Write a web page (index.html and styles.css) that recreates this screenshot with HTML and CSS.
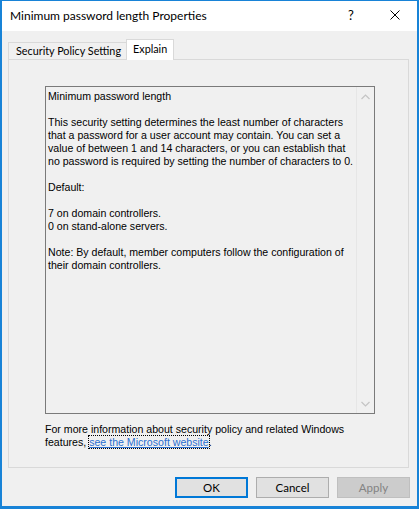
FILE: index.html
```html
<!DOCTYPE html>
<html>
<head>
<meta charset="utf-8">
<link rel="stylesheet" href="styles.css">
</head>
<body>
<div class="window">
  <div class="titlebar">
    <span class="title">Minimum password length Properties</span>
    <span class="help">?</span>
    <span class="close"><svg width="10" height="10" viewBox="0 0 10 10"><path d="M0.5 0.5 L9.5 9.5 M9.5 0.5 L0.5 9.5" stroke="#000" stroke-width="1" fill="none"/></svg></span>
  </div>
  <div class="client">
    <div class="tabs">
      <div class="tab">Security Policy Setting</div>
      <div class="tab active">Explain</div>
    </div>
    <div class="panel">
      <div class="textbox">
        <div class="text">
          <div class="para">Minimum password length</div>
          <div class="para">This security setting determines the least number of characters<br>that a password for a user account may contain. You can set a<br>value of between 1 and 14 characters, or you can establish that<br>no password is required by setting the number of characters to 0.</div>
          <div class="para">Default:</div>
          <div class="para">7 on domain controllers.<br>0 on stand-alone servers.</div>
          <div class="para">Note: By default, member computers follow the configuration of<br>their domain controllers.</div>
        </div>
        <div class="scrollbar">
          <svg class="arrow" width="9" height="6" viewBox="0 0 9 6"><path d="M0.5 5 L4.5 1 L8.5 5" stroke="#c4c4c4" stroke-width="1.2" fill="none"/></svg>
          <svg class="arrow" width="9" height="6" viewBox="0 0 9 6"><path d="M0.5 1 L4.5 5 L8.5 1" stroke="#c4c4c4" stroke-width="1.2" fill="none"/></svg>
        </div>
      </div>
      <div class="info">For more information about security policy and related Windows<br>features, <span class="link">see the Microsoft website</span>.</div>
    </div>
    <div class="buttons">
      <div class="btn default">OK</div>
      <div class="btn">Cancel</div>
      <div class="btn disabled">Apply</div>
    </div>
  </div>
</div>
</body>
</html>
```
FILE: styles.css
```css
html, body {
  margin: 0;
  padding: 0;
  background: #f0f0f0;
}
.window {
  width: 419px;
  height: 509px;
  box-sizing: border-box;
  border: 2px solid #1883d7;
  border-top-width: 1px;
  border-bottom-width: 3px;
  background: #f0f0f0;
  display: flex;
  flex-direction: column;
  font-family: "Liberation Sans", Arial, sans-serif;
  color: #000;
}
.titlebar {
  height: 30px;
  background: #fff;
  display: flex;
  align-items: center;
  font-family: Lato, "Noto Sans", sans-serif;
  font-size: 12px;
}
.title {
  flex: 1;
  padding-left: 8px;
  padding-bottom: 2px;
}
.help {
  width: 12px;
  font-size: 13px;
  margin-right: 30px;
  padding-bottom: 2px;
}
.close {
  width: 10px;
  height: 10px;
  display: flex;
  margin-right: 17px;
  margin-bottom: 2px;
}
.client {
  flex: 1;
  display: flex;
  flex-direction: column;
  padding: 9px 0 0 6px;
}
.tabs {
  display: flex;
  align-items: flex-end;
  height: 20px;
  position: relative;
  z-index: 1;
  margin-bottom: -1px;
}
.tab {
  height: 17px;
  box-sizing: border-box;
  border: 1px solid #d9d9d9;
  border-bottom: none;
  background: #f0f0f0;
  font-family: Lato, "Noto Sans", sans-serif;
  font-size: 10.8px;
  line-height: 16px;
  padding: 0 5px 0 7px;
  white-space: nowrap;
  margin-bottom: 1px;
}
.tab.active {
  height: 21px;
  background: #fff;
  line-height: 18px;
  margin-left: -1px;
  margin-bottom: 0;
  padding: 0 6px 0 6px;
}
.panel {
  width: 401px;
  height: 409px;
  box-sizing: border-box;
  border: 1px solid #d9d9d9;
  background: #f0f0f0;
  padding: 26px 0 0 36px;
  display: flex;
  flex-direction: column;
}
.textbox {
  width: 330px;
  height: 328px;
  box-sizing: border-box;
  border: 1px solid #7a7a7a;
  background: #f0f0f0;
  display: flex;
}
.text {
  flex: 1;
  padding: 3px 0 0 2px;
  font-size: 10.6px;
  line-height: 13px;
  white-space: nowrap;
}
.para {
  margin-bottom: 13px;
}
.scrollbar {
  width: 17px;
  border-left: 1px solid #e6e6e6;
  display: flex;
  flex-direction: column;
  justify-content: space-between;
  align-items: center;
  padding: 7px 0 6px;
}
.info {
  margin-top: 9px;
  font-size: 10.6px;
  line-height: 13px;
  white-space: nowrap;
}
.link {
  color: #2a6fd0;
  text-decoration: underline;
  outline: 1px dotted #000;
  outline-offset: 0;
}
.buttons {
  display: flex;
  justify-content: flex-end;
  gap: 8px;
  padding: 9px 7px 0 0;
}
.btn {
  width: 73px;
  height: 21px;
  box-sizing: border-box;
  border: 1px solid #adadad;
  background: #e1e1e1;
  font-family: Lato, "Noto Sans", sans-serif;
  font-size: 11.5px;
  display: flex;
  align-items: center;
  justify-content: center;
}
.btn.default {
  border: 2px solid #0078d7;
}
.btn.disabled {
  background: #cccccc;
  border-color: #bfbfbf;
  color: #838383;
}
```
